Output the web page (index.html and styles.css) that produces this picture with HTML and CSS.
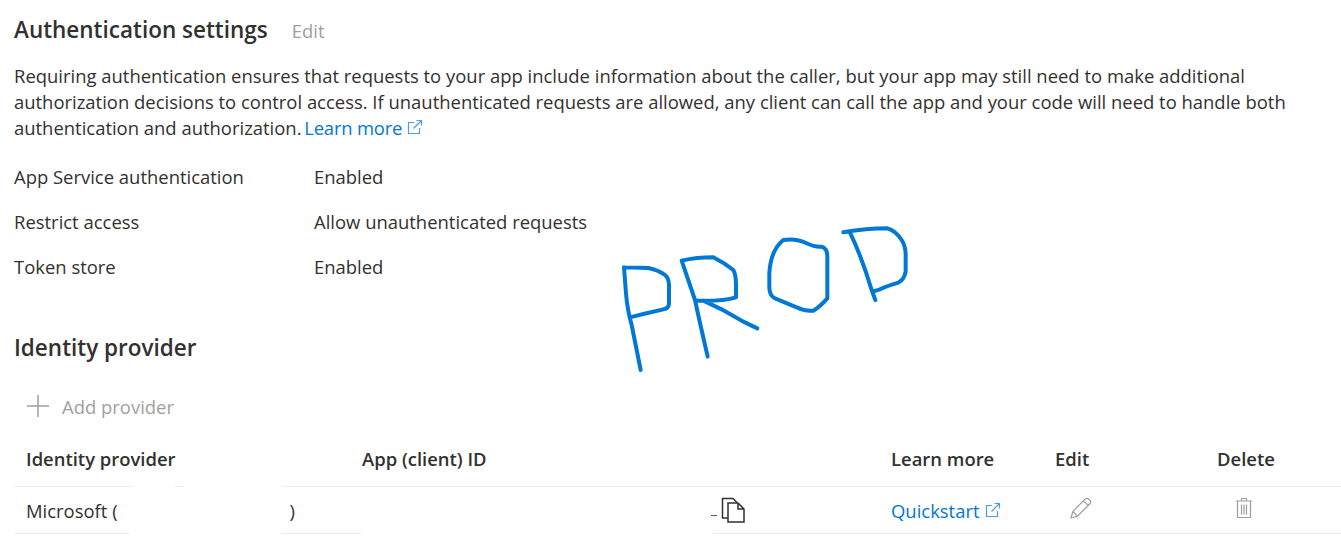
FILE: index.html
```html
<!DOCTYPE html>
<html lang="en">
  <head>
    <meta charset="UTF-8" />
    <title>Authentication settings</title>
    <link rel="stylesheet" href="styles.css">
  </head>
  <body>
    <div class="container">
      <div class="title-row">
        <h2>Authentication settings</h2>
        <span class="edit-link">Edit</span>
      </div>

      <p class="intro">
        Requiring authentication ensures that requests to your app include information about the caller, but your app may still need to make additional authorization decisions to control access. If unauthenticated requests are allowed, any client can call the app and your code will need to handle both authentication and authorization.
        <a class="link intro-link" href="#">Learn more<svg class="ext-icon" viewBox="0 0 16 16"><path d="M12.500 9v5.500h-11v-11H7M9.500 1.500h5v5M14.500 1.500L6.500 9.500" /></svg></a>
      </p>

      <div class="settings">
        <div class="setting"><span class="setting-name">App Service authentication</span><span>Enabled</span></div>
        <div class="setting"><span class="setting-name">Restrict access</span><span>Allow unauthenticated requests</span></div>
        <div class="setting"><span class="setting-name">Token store</span><span>Enabled</span></div>
      </div>

      <h2 class="provider-title">Identity provider</h2>

      <div class="add-provider">
        <svg class="plus-icon" viewBox="0 0 24 24"><path d="M12 1v22M1 12h22" /></svg>
        <span>Add provider</span>
      </div>

      <div class="table">
        <div class="table-row table-head">
          <div>Identity provider</div>
          <div>App (client) ID</div>
          <div>Learn more</div>
          <div>Edit</div>
          <div>Delete</div>
        </div>
        <div class="table-row">
          <div class="provider-cell">Microsoft (<span class="hidden-id"></span>)</div>
          <div class="id-cell">
            <span class="id-dash"></span>
            <svg class="copy-icon" viewBox="0 0 24 26"><path d="M7 21H1.500V1.500H12l4 4" /><path d="M7 6h10l6 6v13H7zM17 6v6h6" /></svg>
          </div>
          <div><a class="link" href="#">Quickstart<svg class="ext-icon" viewBox="0 0 16 16"><path d="M12.500 9v5.500h-11v-11H7M9.500 1.500h5v5M14.500 1.500L6.500 9.500" /></svg></a></div>
          <div>
            <svg class="pencil-icon" viewBox="0 0 22 22"><path d="M1 21l1.800-6.500L15.500 1.800q1.300-1 2.800 0l1.900 1.900q1 1.500 0 2.800L7.500 19.200zM2.800 14.500l4.700 4.700M13.500 3.800l4.700 4.700" /></svg>
          </div>
          <div>
            <svg class="trash-icon" viewBox="0 0 18 22"><path d="M1 4h16M6.500 4V1.500h5V4M2.500 4v16.500h13V4M6.500 7.500v10M9 7.500v10M11.500 7.500v10" /></svg>
          </div>
        </div>
      </div>

      <!-- whited out parts of the screenshot -->
      <div class="redact redact-a"></div>
      <div class="redact redact-b"></div>
      <div class="redact redact-c"></div>
      <div class="redact redact-d"></div>

      <svg class="scribble" viewBox="0 0 990 510">
        <path d="M72 172L78 250Q82 300 95 345L122 480M72 172L145 174Q175 180 195 195Q207 205 207 225L207 280Q207 296 190 298L130 312L90 322" />
        <path d="M245 152Q290 142 340 142Q375 160 400 180Q408 195 408 225L408 262Q370 274 290 272M245 152L285 270Q300 340 323 440M310 272Q370 298 430 335L472 355" />
        <path d="M550 90Q590 85 620 100Q645 112 665 110Q682 115 682 140L682 265Q660 290 640 302Q615 305 590 292L525 265Q510 258 508 235L508 190Q512 120 550 90Z" />
        <path d="M730 67Q800 55 860 55Q885 60 905 90Q918 110 917 140L917 185Q912 210 895 218Q860 228 840 238L818 245M750 68Q785 140 815 240L826 270" />
      </svg>
    </div>
  </body>
</html>
```

FILE: styles.css
```css
html, body {
    margin: 0;
    padding: 0;
    background-color: white;
}

body {
    font-family: "Open Sans", "Noto Sans", Arial, sans-serif;
    font-size: 18.440px;
    color: #323130;
    overflow: hidden;
}

.container {
    position: relative;
    height: 543px;
    padding-left: 14px;
    box-sizing: border-box;
}

/* Headings */
h2 {
    margin: 0;
    font-size: 22.500px;
    font-weight: 600;
    line-height: 30px;
}

.title-row {
    display: flex;
    align-items: center;
    gap: 24px;
    padding-top: 15px;
}

.edit-link {
    color: #a19f9d;
}

.intro {
    margin: 18px 0 0;
    line-height: 26px;
    width: 1300px;
}

.link {
    color: #0078d4;
    text-decoration: none;
}

.intro-link {
    margin-left: -2px;
    letter-spacing: -0.2px;
}

/* Key value list */
.settings {
    margin-top: 13px;
}

.setting {
    display: flex;
    height: 45px;
    align-items: center;
}

.setting-name {
    width: 300px;
}

.provider-title {
    margin-top: 44px;
}

.add-provider {
    display: flex;
    align-items: center;
    gap: 12px;
    margin-top: 28px;
    padding-left: 12px;
    height: 30px;
    color: #a19f9d;
}

/* Providers table */
.table {
    margin-top: 10px;
}

.table-row {
    display: grid;
    grid-template-columns: 336px 529px 164px 162px 1fr;
    align-items: center;
    height: 46px;
    border-bottom: 1px solid #edebe9;
}

.table-row > div {
    padding-left: 12px;
}

.table-head {
    height: 55px;
    font-weight: 560;
}

.provider-cell {
    display: flex;
    white-space: pre;
}

.hidden-id {
    width: 172px;
}

.id-cell {
    display: flex;
    align-items: center;
    justify-content: flex-end;
    gap: 4px;
    padding-right: 134px;
}

.id-dash {
    width: 6px;
    height: 1px;
    margin-top: 10px;
    background-color: #605e5c;
}

/* Icons */
svg path {
    fill: none;
}

.ext-icon {
    width: 16px;
    height: 16px;
    margin-left: 5px;
    vertical-align: 0;
    stroke: #4f9be0;
    stroke-width: 1.200;
}

.plus-icon {
    width: 24px;
    height: 24px;
    stroke: #a19f9d;
    stroke-width: 1.500;
}

.copy-icon {
    width: 24px;
    height: 26px;
    stroke: #323130;
    stroke-width: 1.500;
}

.pencil-icon {
    display: block;
    width: 22px;
    height: 22px;
    margin: -4px 0 0 15px;
    stroke: #a19f9d;
    stroke-width: 1.200;
}

.trash-icon {
    display: block;
    width: 18px;
    height: 22px;
    margin: -4px 0 0 18px;
    stroke: #a19f9d;
    stroke-width: 1.200;
}

/* Whited out bits */
.redact {
    position: absolute;
    background-color: white;
}

.redact-a {
    left: 133px;
    top: 484px;
    width: 42px;
    height: 4px;
}

.redact-b {
    left: 183px;
    top: 484px;
    width: 99px;
    height: 4px;
}

.redact-c {
    left: 130px;
    top: 531px;
    width: 152px;
    height: 4px;
}

.redact-d {
    left: 361px;
    top: 531px;
    width: 352px;
    height: 4px;
}

/* Hand drawn label */
.scribble {
    position: absolute;
    left: 600px;
    top: 210px;
    width: 330px;
    height: 170px;
    stroke: #0078d4;
    stroke-width: 12;
    stroke-linecap: round;
    stroke-linejoin: round;
}
```
